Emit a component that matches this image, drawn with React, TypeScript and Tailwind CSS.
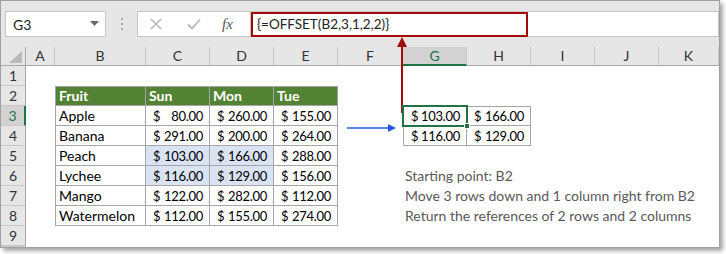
import type { ReactNode } from 'react';

const letters = ['A', 'B', 'C', 'D', 'E', 'F', 'G', 'H', 'I', 'J', 'K'];

const fruits: [string, number, number, number][] = [
  ['Apple', 80, 260, 155],
  ['Banana', 291, 200, 264],
  ['Peach', 103, 166, 288],
  ['Lychee', 116, 129, 156],
  ['Mango', 122, 282, 112],
  ['Watermelon', 112, 155, 274],
];

const result = [
  [103, 166],
  [116, 129],
];

const notes = [
  'Starting point: B2',
  'Move 3 rows down and 1 column right from B2',
  'Return the references of 2 rows and 2 columns',
];

// accounting format: dollar sign pinned left, amount pinned right
function Money({ value }: { value: number }) {
  return (
    <div className="flex w-full justify-between pl-[7px] pr-[6px] text-[13px] tracking-[-0.3px]">
      <span>$</span>
      <span>{value.toFixed(2)}</span>
    </div>
  );
}

function cellFor(row: number, col: number): { content: ReactNode; cls: string } {
  // main table B2:E8
  if (row >= 2 && row <= 8 && col >= 1 && col <= 4) {
    const edge = `border-r border-b border-[#a6a6a6] ${col === 1 ? 'border-l' : ''} ${row === 2 ? 'border-t' : ''}`;
    if (row === 2) {
      const head = ['Fruit', 'Sun', 'Mon', 'Tue'][col - 1];
      return { content: <span className="px-[3px]">{head}</span>, cls: `${edge} bg-[#548235] text-white font-bold` };
    }
    const f = fruits[row - 3];
    if (col === 1) return { content: <span className="px-[3px]">{f[0]}</span>, cls: edge };
    const shaded = (row === 5 || row === 6) && (col === 2 || col === 3);
    return { content: <Money value={f[col - 1] as number} />, cls: `${edge} ${shaded ? 'bg-[#dae3f3]' : ''}` };
  }
  // OFFSET result G3:H4
  if (row >= 3 && row <= 4 && col >= 6 && col <= 7) {
    const edge = `border-r border-b border-[#a6a6a6] ${col === 6 ? 'border-l' : ''} ${row === 3 ? 'border-t' : ''}`;
    const v = result[row - 3][col - 6];
    const active = row === 3 && col === 6;
    return {
      content: (
        <>
          <Money value={v} />
          {active && (
            <div className="absolute left-[-2px] top-[-2px] h-[22px] w-[66px] border-2 border-[#217346]">
              <div className="absolute right-[-4px] bottom-[-4px] h-[6px] w-[6px] border border-white bg-[#217346]" />
            </div>
          )}
        </>
      ),
      cls: `${edge} relative ${active ? 'z-20' : ''}`,
    };
  }
  if (col === 6 && row >= 6 && row <= 8) {
    return {
      content: <span className="whitespace-nowrap px-[2px] text-[#595959]">{notes[row - 6]}</span>,
      cls: 'overflow-visible z-10',
    };
  }
  return { content: null, cls: '' };
}

function FormulaBar() {
  return (
    <div className="flex h-[46px] items-start bg-[#e6e6e6] pt-[10px] pl-[4px]">
      <div className="flex h-[26px] w-[101px] items-center justify-between border border-[#c6c6c6] bg-white pl-[7px] pr-[6px] text-[14px] text-[#222]">
        <span>G3</span>
        <svg width="9" height="6" viewBox="0 0 9 6">
          <path d="M0 0h9L4.5 5z" fill="#6a6a6a" />
        </svg>
      </div>
      <div className="flex w-[31px] flex-col items-center gap-[3px] pt-[7px]">
        <span className="h-[2px] w-[2px] bg-[#a8a8a8]" />
        <span className="h-[2px] w-[2px] bg-[#a8a8a8]" />
        <span className="h-[2px] w-[2px] bg-[#a8a8a8]" />
      </div>
      <div className="flex h-[26px] w-[113px] items-center border border-r-0 border-[#c6c6c6] bg-white">
        <svg width="12" height="12" viewBox="0 0 12 12" className="ml-[12px]">
          <path d="M1 1l10 10M11 1L1 11" stroke="#b8b8b8" strokeWidth="1.6" />
        </svg>
        <svg width="14" height="12" viewBox="0 0 14 12" className="ml-[25px]">
          <path d="M1 6.5l4 4L13 1.5" stroke="#b8b8b8" strokeWidth="1.8" fill="none" />
        </svg>
        <span className="ml-[21px] font-['Liberation_Serif',serif] text-[15px] italic text-[#555]">fx</span>
      </div>
      <div className="flex h-[26px] flex-1 items-center border border-[#c6c6c6] bg-white">
        <div className="flex h-[25px] w-[277px] items-center border-2 border-[#a50a0a] pl-[4px] text-[13.5px] text-[#222]">
          {'{=OFFSET(B2,3,1,2,2)}'}
        </div>
      </div>
    </div>
  );
}

function Sheet() {
  const rows = Array.from({ length: 10 }, (_, i) => i + 1);
  return (
    <div className="grid flex-1 grid-cols-[25px_29px_91px_64px_64px_64px_65px_64px_64px_64px_64px_1fr] grid-rows-[19px_repeat(9,20px)_1fr] text-[14px] leading-[18px]">
      {/* corner */}
      <div className="relative border-r border-b border-[#a8a8a8] bg-[#e6e6e6]">
        <svg width="13" height="12" viewBox="0 0 13 12" className="absolute right-[3px] bottom-[2px]">
          <path d="M13 0v12H0z" fill="#b9b9b9" />
        </svg>
      </div>
      {letters.map((l, i) => (
        <div
          key={l}
          className={`flex items-center justify-center border-r border-b ${
            i === 6 ? 'border-b-2 border-b-[#217346] bg-[#d2d2d2] text-[#217346]' : 'border-b-[#a8a8a8] bg-[#e6e6e6] text-[#333]'
          } border-r-[#c8c8c8]`}
        >
          {l}
        </div>
      ))}
      {rows.map((r) => (
        <div key={r} className="contents">
          <div
            className={`flex items-center justify-center border-b border-b-[#c8c8c8] ${
              r === 3 ? 'border-r-2 border-r-[#217346] bg-[#d2d2d2] text-[#217346]' : 'border-r border-r-[#a8a8a8] bg-[#e6e6e6] text-[#333]'
            }`}
          >
            {r <= 9 ? r : ''}
          </div>
          {letters.map((l, c) => {
            const { content, cls } = cellFor(r, c);
            return (
              <div key={l} className={`flex items-center text-black ${cls}`}>
                {content}
              </div>
            );
          })}
        </div>
      ))}
    </div>
  );
}

export default function App() {
  return (
    <div className="relative h-[254px] w-[726px] bg-white font-['Lato',sans-serif]">
      <div className="flex h-[248px] w-[720px] flex-col overflow-hidden border border-[#a0a0a0] bg-white shadow-[3px_3px_4px_rgba(0,0,0,0.35)]">
        <FormulaBar />
        <Sheet />
      </div>
      <svg width="726" height="254" className="pointer-events-none absolute top-0 left-0">
        <line x1="402" y1="113" x2="402" y2="44" stroke="#a50a0a" strokeWidth="2" />
        <path d="M402 37l-5 10h10z" fill="#a50a0a" />
        <line x1="347" y1="128" x2="389" y2="128" stroke="#2358e0" strokeWidth="1.5" />
        <path d="M396 128l-8-4v8z" fill="#2358e0" />
      </svg>
    </div>
  );
}
